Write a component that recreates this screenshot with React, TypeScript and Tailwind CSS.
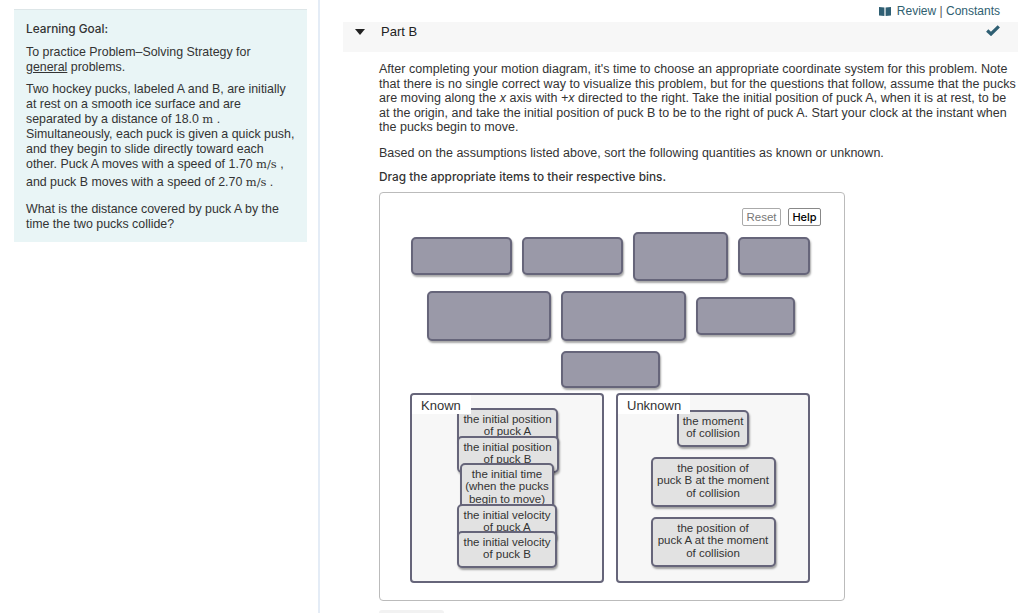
import React from 'react';

const Token = ({ className = '' }: { className?: string }) => (
  <div className={`bg-[#9a99a8] border-2 border-[#66657a] rounded-[5px] shadow-[1px_2px_2px_rgba(0,0,0,0.35)] ${className}`} />
);

const Card = ({ lines, className = '' }: { lines: string[]; className?: string }) => (
  <div className={`relative overflow-hidden bg-[#e2e2e2] border-2 border-[#66657a] rounded-[5px] shadow-[1px_2px_2px_rgba(0,0,0,0.35)] text-center text-[11.5px] leading-[12.8px] text-[#333] whitespace-nowrap pt-[3px] ${className}`}>
    {lines.map((line, i) => (
      <div key={i}>{line}</div>
    ))}
  </div>
);

const Unit = ({ children }: { children: React.ReactNode }) => (
  <span className="font-['DejaVu_Serif',serif] text-[11.5px]">{children}</span>
);

export default function App() {
  return (
    <div className="h-[613px] overflow-hidden bg-white flex font-['Liberation_Sans',Arial,sans-serif] text-[#333]">
      {/* Learning goal side panel */}
      <aside className="w-[320px] shrink-0 border-r-2 border-[#e4ecf6] pl-[14px] pr-[11px] pt-[9px]">
        <div className="h-[233px] bg-[#e9f5f6] border-t border-[#dde6e8] px-[12px] pt-[12px] text-[12.4px] leading-[15px] whitespace-nowrap">
          <p className="font-['Inter',sans-serif] font-medium text-[11.8px]">Learning Goal:</p>
          <p className="mt-[8px]">
            To practice Problem–Solving Strategy for
            <br />
            <span className="underline">general</span> problems.
          </p>
          <p className="mt-[7px]">
            Two hockey pucks, labeled A and B, are initially
            <br />
            at rest on a smooth ice surface and are
            <br />
            separated by a distance of 18.0 <Unit>m</Unit> .
            <br />
            Simultaneously, each puck is given a quick push,
            <br />
            and they begin to slide directly toward each
            <br />
            other. Puck A moves with a speed of 1.70 <Unit>m/s</Unit> ,
            <br />
            <span className="block mt-[3px]">
              and puck B moves with a speed of 2.70 <Unit>m/s</Unit> .
            </span>
          </p>
          <p className="mt-[12px]">
            What is the distance covered by puck A by the
            <br />
            time the two pucks collide?
          </p>
        </div>
      </aside>

      <main className="flex-1 pl-[23px] pr-[6px]">
        {/* Review | Constants */}
        <div className="h-[22px] flex items-center justify-end gap-[6px] pr-[18px] text-[12px] text-[#2f6070]">
          <svg width="12" height="10" viewBox="0 0 12 10" fill="#2f5f73">
            <path d="M0 1 L5.4 1.4 V10 L0 9.4 Z" />
            <path d="M12 1 L6.6 1.4 V10 L12 9.4 Z" />
          </svg>
          <span>
            Review <span className="text-[#555]">|</span> Constants
          </span>
        </div>

        {/* Part header */}
        <div className="h-[30px] bg-[#f7f7f7] flex items-start pl-[12px] pr-[18px]">
          <svg width="10" height="6" viewBox="0 0 10 6" className="mt-[7px]" fill="#222">
            <path d="M0 0 H10 L5 6 Z" />
          </svg>
          <span className="ml-[16px] mt-[2px] text-[13px] leading-[15px] text-[#222]">Part B</span>
          <svg width="14" height="11" viewBox="0 0 14 11" className="ml-auto mt-[3px]" fill="none" stroke="#2f5f73" strokeWidth="3.2">
            <path d="M1.2 5.5 L5 9 L12.8 1.4" />
          </svg>
        </div>

        <div className="pl-[36px] text-[12.5px] leading-[14.5px] whitespace-nowrap">
          <div className="tracking-[0.02px]">
            <p className="mt-[10px]">
              After completing your motion diagram, it's time to choose an appropriate coordinate system for this problem. Note
              <br />
              that there is no single correct way to visualize this problem, but for the questions that follow, assume that the pucks
              <br />
              are moving along the <i>x</i> axis with <i>+x</i> directed to the right. Take the initial position of puck A, when it is at rest, to be
              <br />
              at the origin, and take the initial position of puck B to be to the right of puck A. Start your clock at the instant when
              <br />
              the pucks begin to move.
            </p>
            <p className="mt-[11px]">Based on the assumptions listed above, sort the following quantities as known or unknown.</p>
            <p className="mt-[10px] font-['Inter',sans-serif] font-medium text-[11.8px]">Drag the appropriate items to their respective bins.</p>
          </div>

          {/* Sorting widget */}
          <div className="mt-[7px] w-[466px] h-[409px] border border-[#bbb] rounded-[4px] pl-[30px] pt-[15px]">
            <div className="w-[411px] h-[20px] flex justify-end gap-[7px]">
              <span className="h-[18px] w-[39px] border border-[#aaa] rounded-[2px] text-[11.5px] leading-[16px] text-center text-[#777]">Reset</span>
              <span className="h-[18px] w-[33px] border border-[#888] rounded-[2px] font-['Inter',sans-serif] text-[11px] leading-[16px] text-center text-black font-medium">Help</span>
            </div>

            <div className="w-[401px] mt-[4px] flex flex-col gap-[10px]">
              <div className="flex items-center justify-center gap-[10px]">
                <Token className="w-[101px] h-[38px]" />
                <Token className="w-[101px] h-[38px]" />
                <Token className="w-[95px] h-[49px]" />
                <Token className="w-[72px] h-[38px]" />
              </div>
              <div className="flex items-center justify-center gap-[10px]">
                <Token className="w-[124px] h-[50px]" />
                <Token className="w-[125px] h-[50px]" />
                <Token className="w-[99px] h-[38px]" />
              </div>
              <div className="flex justify-center">
                <Token className="w-[99px] h-[37px]" />
              </div>
            </div>

            {/* Bins */}
            <div className="mt-[5px] flex gap-[12px]">
              <div className="relative w-[194px] h-[190px] bg-[#f7f7f7] border-2 border-[#66657a] rounded-[4px] pt-[13px] flex flex-col items-center">
                <span className="absolute z-10 left-0 top-0 w-[59px] h-[19px] bg-white rounded-tl-[3px] pl-[9px] text-[13px] leading-[21px]">Known</span>
                <Card className="w-[101px] h-[37px] ml-[1px]" lines={['the initial position', 'of puck A']} />
                <Card className="w-[102px] h-[37px] -mt-[9px] ml-[1px]" lines={['the initial position', 'of puck B']} />
                <Card className="w-[94px] h-[49px] -mt-[10px]" lines={['the initial time', '(when the pucks', 'begin to move)']} />
                <Card className="w-[100px] h-[37px] -mt-[8px]" lines={['the initial velocity', 'of puck A']} />
                <Card className="w-[100px] h-[37px] -mt-[10px]" lines={['the initial velocity', 'of puck B']} />
              </div>
              <div className="relative w-[194px] h-[190px] bg-[#f7f7f7] border-2 border-[#66657a] rounded-[4px] pt-[15px] flex flex-col items-center gap-[10px]">
                <span className="absolute z-10 left-0 top-0 w-[72px] h-[19px] bg-white rounded-tl-[3px] pl-[9px] text-[13px] leading-[21px]">Unknown</span>
                <Card className="w-[72px] h-[37px]" lines={['the moment', 'of collision']} />
                <Card className="w-[125px] h-[50px]" lines={['the position of', 'puck B at the moment', 'of collision']} />
                <Card className="w-[125px] h-[50px]" lines={['the position of', 'puck A at the moment', 'of collision']} />
              </div>
            </div>
          </div>

          <div className="mt-[9px] w-[65px] h-[20px] bg-[#f2f2f2] rounded-[3px]" />
        </div>
      </main>
    </div>
  );
}
